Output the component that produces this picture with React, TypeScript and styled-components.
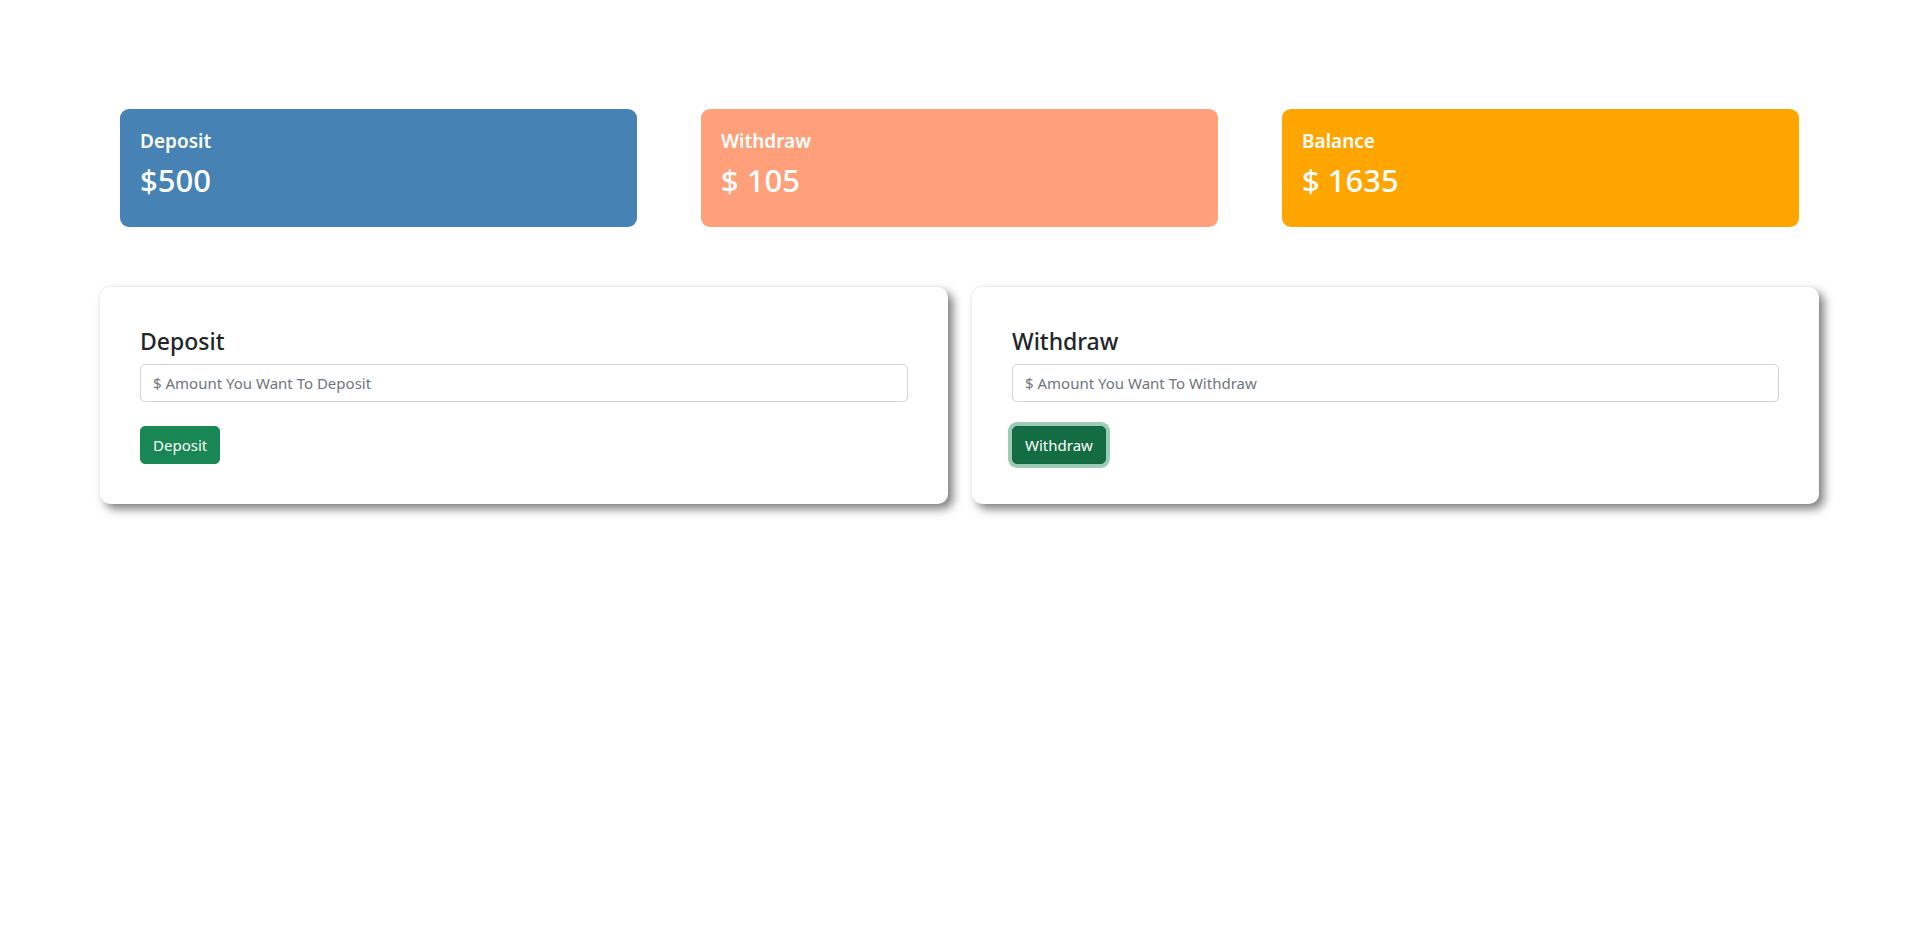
import React from "react";
import styled, { createGlobalStyle } from "styled-components";

const GlobalStyle = createGlobalStyle`
  * { box-sizing: border-box; }
  html, body { margin: 0; padding: 0; background: #fff; }
  body {
    font-family: "Noto Sans", "Open Sans", "Liberation Sans", sans-serif;
    color: #212529;
    font-size: 16px;
  }
`;

const Page = styled.div`
  display: flex;
  flex-direction: column;
  align-items: center;
  padding-top: 109px;
  padding-bottom: 60px;
`;

const StatsRow = styled.div`
  display: grid;
  grid-template-columns: repeat(3, 517px);
  column-gap: 64px;
`;

const StatCard = styled.div<{ $bg: string }>`
  background: ${(p) => p.$bg};
  color: #fff;
  border-radius: 9px;
  padding: 20px 20px 0;
  height: 118px;
`;

const StatLabel = styled.div`
  font-size: 19px;
  font-weight: 600;
  line-height: 24px;
  margin-bottom: 8px;
`;

const StatValue = styled.div`
  font-size: 31px;
  font-weight: 500;
  line-height: 38px;
`;

const FormsRow = styled.div`
  display: grid;
  grid-template-columns: 848px 847px;
  column-gap: 24px;
  margin-top: 60px;
`;

const FormCard = styled.div`
  background: #fff;
  border-radius: 10px;
  padding: 40px;
  height: 217px;
  box-shadow: 5px 5px 10px rgba(0, 0, 0, 0.5), 0 0 3px rgba(0, 0, 0, 0.06);
`;

const FormTitle = styled.h4`
  margin: 0 0 8px;
  font-size: 23px;
  font-weight: 500;
  line-height: 29px;
  color: #212529;
`;

const AmountInput = styled.input`
  display: block;
  width: 100%;
  height: 38px;
  padding: 6px 12px;
  font-family: inherit;
  font-size: 15px;
  color: #212529;
  border: 1px solid #ced4da;
  border-radius: 5px;
  outline: none;
  &::placeholder { color: #6c757d; }
`;

const ActionButton = styled.button<{ $focused?: boolean }>`
  margin-top: 24px;
  height: 38px;
  padding: 0 12px;
  font-family: inherit;
  font-size: 15px;
  color: #fff;
  border: 1px solid ${(p) => (p.$focused ? "#13653f" : "#198754")};
  background: ${(p) => (p.$focused ? "#146c43" : "#198754")};
  border-radius: 5px;
  box-shadow: ${(p) => (p.$focused ? "0 0 0 4px rgba(60, 153, 110, 0.5)" : "none")};
  cursor: pointer;
`;

export default function App() {
  return (
    <>
      <GlobalStyle />
      <Page>
        <StatsRow>
          <StatCard $bg="steelblue">
            <StatLabel>Deposit</StatLabel>
            <StatValue>$500</StatValue>
          </StatCard>
          <StatCard $bg="lightsalmon">
            <StatLabel>Withdraw</StatLabel>
            <StatValue>$ 105</StatValue>
          </StatCard>
          <StatCard $bg="orange">
            <StatLabel>Balance</StatLabel>
            <StatValue>$ 1635</StatValue>
          </StatCard>
        </StatsRow>
        <FormsRow>
          <FormCard>
            <FormTitle>Deposit</FormTitle>
            <AmountInput placeholder="$ Amount You Want To Deposit" />
            <ActionButton>Deposit</ActionButton>
          </FormCard>
          <FormCard>
            <FormTitle>Withdraw</FormTitle>
            <AmountInput placeholder="$ Amount You Want To Withdraw" />
            <ActionButton $focused>Withdraw</ActionButton>
          </FormCard>
        </FormsRow>
      </Page>
    </>
  );
}
